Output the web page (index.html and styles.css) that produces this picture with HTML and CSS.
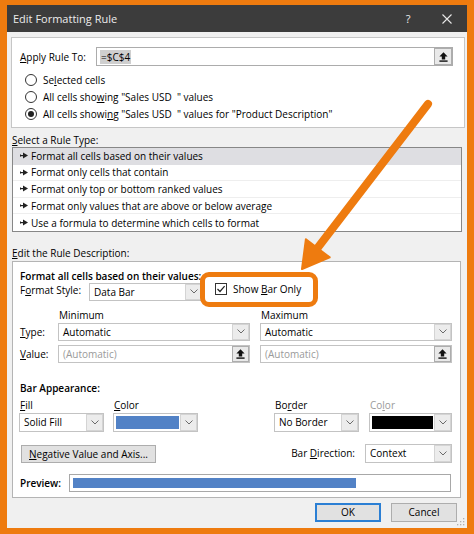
FILE: index.html
```html
<!DOCTYPE html>
<html>
<head>
<meta charset="utf-8">
<link rel="stylesheet" href="styles.css">
</head>
<body>
<div class="frame">
  <div class="dialog">
    <div class="titlebar">
      <span class="title">Edit Formatting Rule</span>
      <span class="tb-help">?</span>
      <span class="tb-close"><svg width="10" height="10" viewBox="0 0 10 10"><path d="M0.5 0.5 L9.5 9.5 M9.5 0.5 L0.5 9.5" stroke="#e8e8e8" stroke-width="1.1" fill="none"/></svg></span>
    </div>

    <div class="apply-box">
      <div class="apply-row">
        <span class="apply-label"><u>A</u>pply Rule To:</span>
        <div class="ref-input">
          <span class="ref-text">=$C$4</span>
          <span class="ref-btn"><svg width="9" height="10" viewBox="0 0 9 10"><path d="M4.5 0.3 L8.6 4.6 H6.2 V7.4 H2.8 V4.6 H0.4 Z" fill="#111"/><rect x="0.4" y="8.4" width="8.2" height="1.4" fill="#111"/></svg></span>
        </div>
      </div>
      <div class="radio-row first"><span class="radio"></span><span>Se<u>l</u>ected cells</span></div>
      <div class="radio-row"><span class="radio"></span><span>All cells sho<u>w</u>ing "Sales USD&nbsp; " values</span></div>
      <div class="radio-row"><span class="radio checked"></span><span>All cells showi<u>n</u>g "Sales USD&nbsp; " values for "Product Description"</span></div>
    </div>

    <div class="section-label sel-label"><u>S</u>elect a Rule Type:</div>
    <div class="rule-list">
      <div class="rule active"><svg class="rarrow" width="8" height="7" viewBox="0 0 8 7"><rect x="0" y="2.5" width="1" height="2" fill="#222"/><rect x="0" y="3" width="4" height="1.2" fill="#222"/><path d="M3 0.6 L8 3.6 L3 6.6 Z" fill="#222"/></svg><span>Format all cells based on their values</span></div>
      <div class="rule"><svg class="rarrow" width="8" height="7" viewBox="0 0 8 7"><rect x="0" y="2.5" width="1" height="2" fill="#222"/><rect x="0" y="3" width="4" height="1.2" fill="#222"/><path d="M3 0.6 L8 3.6 L3 6.6 Z" fill="#222"/></svg><span>Format only cells that contain</span></div>
      <div class="rule"><svg class="rarrow" width="8" height="7" viewBox="0 0 8 7"><rect x="0" y="2.5" width="1" height="2" fill="#222"/><rect x="0" y="3" width="4" height="1.2" fill="#222"/><path d="M3 0.6 L8 3.6 L3 6.6 Z" fill="#222"/></svg><span>Format only top or bottom ranked values</span></div>
      <div class="rule"><svg class="rarrow" width="8" height="7" viewBox="0 0 8 7"><rect x="0" y="2.5" width="1" height="2" fill="#222"/><rect x="0" y="3" width="4" height="1.2" fill="#222"/><path d="M3 0.6 L8 3.6 L3 6.6 Z" fill="#222"/></svg><span>Format only values that are above or below average</span></div>
      <div class="rule last"><svg class="rarrow" width="8" height="7" viewBox="0 0 8 7"><rect x="0" y="2.5" width="1" height="2" fill="#222"/><rect x="0" y="3" width="4" height="1.2" fill="#222"/><path d="M3 0.6 L8 3.6 L3 6.6 Z" fill="#222"/></svg><span>Use a formula to determine which cells to format</span></div>
    </div>

    <div class="section-label edit-label"><u>E</u>dit the Rule Description:</div>
    <div class="desc-box">
      <div class="row r1 bold">Format all cells based on their values:</div>

      <div class="row r2">
        <span class="lbl style-lbl">F<u>o</u>rmat Style:</span>
        <div class="select w114"><span class="sel-text">Data Bar</span><span class="dd"><svg width="8" height="5" viewBox="0 0 8 5"><path d="M0.5 0.5 L4 4 L7.5 0.5" fill="none" stroke="#6a6a6a" stroke-width="1"/></svg></span></div>
        <div class="highlight">
          <span class="checkbox"><svg width="10" height="10" viewBox="0 0 10 10"><path d="M1.5 5 L4 7.5 L8.6 2.2" fill="none" stroke="#222" stroke-width="1.2"/></svg></span>
          <span>Show <u>B</u>ar Only</span>
        </div>
      </div>

      <div class="row grid3 r3">
        <span></span>
        <span class="col-head">Minimum</span>
        <span class="col-head">Maximum</span>
      </div>

      <div class="row grid3 r4">
        <span class="lbl"><u>T</u>ype:</span>
        <div class="select"><span class="sel-text">Automatic</span><span class="dd"><svg width="8" height="5" viewBox="0 0 8 5"><path d="M0.5 0.5 L4 4 L7.5 0.5" fill="none" stroke="#6a6a6a" stroke-width="1"/></svg></span></div>
        <div class="select"><span class="sel-text">Automatic</span><span class="dd"><svg width="8" height="5" viewBox="0 0 8 5"><path d="M0.5 0.5 L4 4 L7.5 0.5" fill="none" stroke="#6a6a6a" stroke-width="1"/></svg></span></div>
      </div>

      <div class="row grid3 r5">
        <span class="lbl"><u>V</u>alue:</span>
        <div class="select"><span class="sel-text muted">(Automatic)</span><span class="ref-btn small"><svg width="9" height="10" viewBox="0 0 9 10"><path d="M4.5 0.3 L8.6 4.6 H6.2 V7.4 H2.8 V4.6 H0.4 Z" fill="#111"/><rect x="0.4" y="8.4" width="8.2" height="1.4" fill="#111"/></svg></span></div>
        <div class="select"><span class="sel-text muted">(Automatic)</span><span class="ref-btn small"><svg width="9" height="10" viewBox="0 0 9 10"><path d="M4.5 0.3 L8.6 4.6 H6.2 V7.4 H2.8 V4.6 H0.4 Z" fill="#111"/><rect x="0.4" y="8.4" width="8.2" height="1.4" fill="#111"/></svg></span></div>
      </div>

      <div class="row r6 bold">Bar Appearance:</div>

      <div class="row r7">
        <span class="c1 clbl"><u>F</u>ill</span>
        <span class="c2 clbl"><u>C</u>olor</span>
        <span class="c3 clbl">Bo<u>r</u>der</span>
        <span class="c4 clbl muted">Co<u>l</u>or</span>
      </div>

      <div class="row r8">
        <div class="select c1"><span class="sel-text">Solid Fill</span><span class="dd"><svg width="8" height="5" viewBox="0 0 8 5"><path d="M0.5 0.5 L4 4 L7.5 0.5" fill="none" stroke="#6a6a6a" stroke-width="1"/></svg></span></div>
        <div class="select c2"><span class="swatch blue"></span><span class="dd"><svg width="8" height="5" viewBox="0 0 8 5"><path d="M0.5 0.5 L4 4 L7.5 0.5" fill="none" stroke="#6a6a6a" stroke-width="1"/></svg></span></div>
        <div class="select c3"><span class="sel-text">No Border</span><span class="dd"><svg width="8" height="5" viewBox="0 0 8 5"><path d="M0.5 0.5 L4 4 L7.5 0.5" fill="none" stroke="#6a6a6a" stroke-width="1"/></svg></span></div>
        <div class="select c4"><span class="swatch black"></span><span class="dd"><svg width="8" height="5" viewBox="0 0 8 5"><path d="M0.5 0.5 L4 4 L7.5 0.5" fill="none" stroke="#6a6a6a" stroke-width="1"/></svg></span></div>
      </div>

      <div class="row r9">
        <span class="btn neg"><u>N</u>egative Value and Axis...</span>
        <span class="dir-lbl">Bar <u>D</u>irection:</span>
        <div class="select w87"><span class="sel-text">Context</span><span class="dd"><svg width="8" height="5" viewBox="0 0 8 5"><path d="M0.5 0.5 L4 4 L7.5 0.5" fill="none" stroke="#6a6a6a" stroke-width="1"/></svg></span></div>
      </div>

      <div class="row r10">
        <span class="preview-lbl bold">Preview:</span>
        <div class="preview-box"><span class="preview-bar"></span></div>
      </div>
    </div>

    <div class="footer">
      <span class="btn ok">OK</span>
      <span class="btn">Cancel</span>
    </div>

    <svg class="grip" width="9" height="9" viewBox="0 0 9 9">
      <rect x="7" y="1" width="1.3" height="1.3" fill="#b0b0b0"/>
      <rect x="4" y="4" width="1.3" height="1.3" fill="#b0b0b0"/>
      <rect x="7" y="4" width="1.3" height="1.3" fill="#b0b0b0"/>
      <rect x="1" y="7" width="1.3" height="1.3" fill="#b0b0b0"/>
      <rect x="4" y="7" width="1.3" height="1.3" fill="#b0b0b0"/>
      <rect x="7" y="7" width="1.3" height="1.3" fill="#b0b0b0"/>
    </svg>
  </div>

  <svg class="callout" width="474" height="534" viewBox="0 0 474 534">
    <line x1="428" y1="104" x2="316" y2="250" stroke="#ee7b0f" stroke-width="8" stroke-linecap="round"/>
    <path d="M302 269 L305.9 239.2 L329.7 257.4 Z" fill="#ee7b0f" stroke="#ee7b0f" stroke-width="2" stroke-linejoin="round"/>
  </svg>
</div>
</body>
</html>
```

FILE: styles.css
```css
* { box-sizing: border-box; }
html, body { margin: 0; padding: 0; }
body {
  width: 474px;
  height: 534px;
  overflow: hidden;
  background: #ee7b0f;
  font-family: "Open Sans", "Noto Sans", sans-serif;
  font-size: 10px;
  color: #000;
}
u { text-decoration: underline; text-underline-offset: 1px; }

.frame {
  position: relative;
  width: 474px;
  height: 534px;
  padding: 5px 7px 6px 7px;
}
.dialog {
  position: relative;
  width: 460px;
  height: 523px;
  background: #f0f0f0;
  display: flex;
  flex-direction: column;
}

/* title bar */
.titlebar {
  height: 27px;
  flex: none;
  background: #3c3c3c;
  color: #ececec;
  display: flex;
  align-items: center;
  padding-left: 6px;
}
.title { flex: 1; font-size: 11px; }
.tb-help { width: 20px; text-align: center; font-size: 11px; margin-right: 9px; }
.tb-close { width: 40px; display: flex; justify-content: center; align-items: center; }

/* apply box */
.apply-box {
  margin: 5px 2px 0 4px;
  background: #fff;
  border: 1px solid #c6c6c6;
  padding: 9px 11px 5px 8px;
  flex: none;
}
.apply-row { display: flex; align-items: center; height: 19px; }
.apply-label { width: 76px; line-height: 14px; }
.ref-input {
  width: 357px;
  height: 19px;
  border: 1px solid #acacac;
  display: flex;
  align-items: center;
  background: #fff;
}
.ref-text {
  margin-left: 3px;
  background: #cfcfcf;
  line-height: 14px;
  padding: 0 1px;
}
.ref-btn {
  margin-left: auto;
  margin-right: 0;
  width: 18px;
  height: 17px;
  border: 1px solid #adadad;
  background: #e9e9e9;
  display: flex;
  align-items: center;
  justify-content: center;
  flex: none;
}
.ref-btn.small { width: 17px; height: 16px; }
.radio-row { display: flex; align-items: center; height: 17px; line-height: 14px; }
.radio-row.first { margin-top: 5px; }
.radio {
  width: 12px;
  height: 12px;
  border: 1px solid #333;
  border-radius: 50%;
  background: #fff;
  margin-left: 5px;
  margin-right: 6px;
  display: flex;
  align-items: center;
  justify-content: center;
  flex: none;
}
.radio.checked::after {
  content: "";
  width: 6px;
  height: 6px;
  border-radius: 50%;
  background: #222;
}

/* section labels */
.section-label { margin-left: 5px; line-height: 14px; height: 14px; flex: none; }
.sel-label { margin-top: 5px; }
.edit-label { margin-top: 14px; }

/* rule list */
.rule-list {
  margin: 0 5px 0 5px;
  border: 1px solid #878787;
  background: #fff;
  flex: none;
}
.rule {
  height: 16.6px;
  display: flex;
  align-items: center;
  padding-left: 7px;
  border-bottom: 1px solid #eeeeee;
  line-height: 14px;
}
.rule.last { border-bottom: none; }
.rule.active { background: #dedee2; border-bottom-color: #dedee2; }
.rarrow { margin-right: 3px; flex: none; }

/* description box */
.desc-box {
  margin: 1px 0 0 5px;
  width: 449px;
  height: 237px;
  flex: none;
  border: 1px solid #b4b4b4;
  background: #fff;
  padding: 7px 8px 5px 7px;
}
.row { line-height: 14px; }
.bold { font-weight: 600; }
.r1 { height: 14px; }
.r2 { height: 18px; display: flex; align-items: center; }
.style-lbl { width: 69px; align-self: flex-start; }
.grid3 { display: grid; grid-template-columns: 38px 202px 192px; align-items: center; }
.grid3 .select { width: 192px; }
.r3 { margin-top: 7px; height: 14px; }
.col-head { padding-left: 1px; }
.r4 { margin-top: 1px; height: 18px; }
.r5 { margin-top: 4px; height: 18px; }
.r6 { margin-top: 18px; height: 14px; }
.r7 { margin-top: 3px; height: 14px; display: flex; }
.r8 { margin-top: 1px; height: 19px; display: flex; }
.r9 { margin-top: 12px; height: 19px; display: flex; align-items: center; }
.r10 { margin-top: 11px; height: 18px; display: flex; align-items: center; }

.select {
  height: 18px;
  border: 1px solid #c3c3c3;
  background: #fff;
  display: flex;
  align-items: center;
}
.r8 .select { height: 19px; }
.w114 { width: 114px; }
.w87 { width: 87px; height: 19px; }
.sel-text { flex: 1; padding-left: 4px; white-space: nowrap; }
.muted { color: #9a9a9a; }
.dd {
  width: 17px;
  height: 100%;
  border: 1px solid #d4d4d4;
  background: #ececec;
  display: flex;
  align-items: center;
  justify-content: center;
  flex: none;
}

.highlight {
  align-self: flex-start;
  margin: -11px 0 -6px -3px;
  width: 118px;
  height: 35px;
  flex: none;
  border: 5px solid #ee7b0f;
  border-radius: 9px;
  background: #fff;
  display: flex;
  align-items: center;
  padding-left: 10px;
  position: relative;
}
.checkbox {
  width: 12px;
  height: 12px;
  border: 1px solid #333;
  background: #fff;
  margin-right: 6px;
  display: flex;
  align-items: center;
  justify-content: center;
  flex: none;
}

/* bar appearance columns */
.c1 { margin-left: -1px; width: 85px; }
.c2 { margin-left: 9px; width: 85px; }
.c3 { margin-left: 76px; width: 85px; }
.c4 { margin-left: 10px; width: 83px; }
.clbl { padding-left: 1px; }
.swatch { flex: 1; height: 13px; margin: 0 1px 0 2px; }
.swatch.blue { background: #5282c6; }
.swatch.black { background: #000; }

.btn {
  display: flex;
  align-items: center;
  justify-content: center;
  height: 19px;
  width: 66px;
  border: 1px solid #adadad;
  background: #e1e1e1;
  line-height: 14px;
}
.btn.neg { width: 135px; height: 18px; margin-left: 1px; align-self: flex-start; margin-top: 1px; }
.btn.ok { border: 2px solid #2b7fd4; }
.dir-lbl { margin-left: auto; margin-right: 10px; }

.preview-lbl { width: 49px; }
.preview-box {
  width: 382px;
  height: 18px;
  border: 1px solid #a8a8a8;
  background: #fff;
  padding: 3px 0 0 3px;
}
.preview-bar { display: block; width: 283px; height: 10px; background: #5282c6; }

.footer {
  margin-top: 5px;
  display: flex;
  justify-content: flex-end;
  gap: 10px;
  padding-right: 10px;
  flex: none;
}

.grip { position: absolute; right: 2px; bottom: 2px; }
.callout { position: absolute; left: 0; top: 0; pointer-events: none; }
```
